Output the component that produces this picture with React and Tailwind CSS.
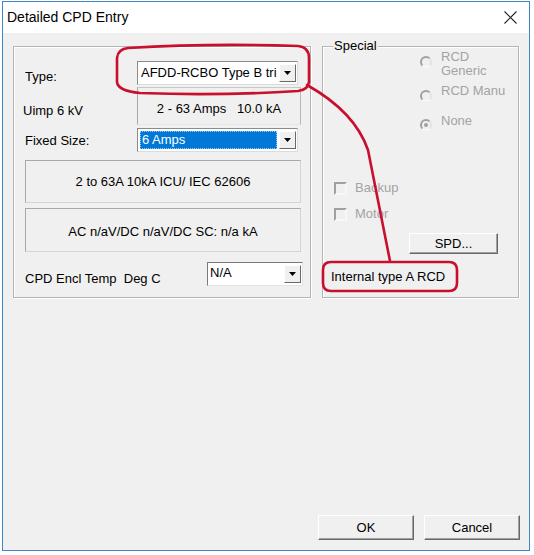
import React from 'react';

const font = "font-['Liberation_Sans',Arial,sans-serif]";

const Arrow = () => (
  <svg width="7" height="4" viewBox="0 0 7 4">
    <polygon points="0,0 7,0 3.5,4" fill="#000" />
  </svg>
);

const DropButton = () => (
  <div className="w-[17px] h-[18px] mr-[1px] shrink-0 flex items-center justify-center bg-[#f0f0f0] border border-t-white border-l-white border-b-[#696969] border-r-[#696969]">
    <Arrow />
  </div>
);

const Combo = ({ value, width, selected }) => (
  <div
    className={`${width} h-[24px] shrink-0 flex items-center bg-white border border-t-[#8a8a8a] border-l-[#8a8a8a] border-b-[#dcdcdc] border-r-[#dcdcdc]`}
  >
    {selected ? (
      <div className="flex-1 h-[18px] ml-[2px] mr-[2px] bg-[#0078d7] text-white pl-[1px] leading-[16px] border border-dotted border-[#9ec9f0]">
        {value}
      </div>
    ) : (
      <div className="flex-1 pl-[3px] whitespace-nowrap overflow-hidden">{value}</div>
    )}
    <DropButton />
  </div>
);

const Radio = ({ checked, children, className = '' }) => (
  <div className={`flex items-start ${className}`}>
    <div className="mt-[6px] w-[12px] h-[12px] shrink-0 rounded-full border-2 border-t-[#a0a0a0] border-l-[#a0a0a0] border-b-[#f7f7f7] border-r-[#e4e4e4] flex items-center justify-center">
      {checked && <div className="w-[4px] h-[4px] rounded-full bg-[#a0a0a0]" />}
    </div>
    <div className="ml-[9px] text-[#a3a3a3] leading-[14px]">{children}</div>
  </div>
);

const Check = ({ label, className = '' }) => (
  <div className={`flex items-center h-[14px] ${className}`}>
    <div className="w-[13px] h-[13px] shrink-0 border-2 border-t-[#a0a0a0] border-l-[#a0a0a0] border-b-[#f7f7f7] border-r-[#f7f7f7] bg-[#f0f0f0]" />
    <span className="ml-[8px] text-[#a3a3a3] leading-[14px]">{label}</span>
  </div>
);

const Button = ({ label, className = '' }) => (
  <div
    className={`flex items-center justify-center bg-[#f0f0f0] border border-t-white border-l-white border-b-[#696969] border-r-[#696969] shadow-[inset_-1px_-1px_0_#a0a0a0] ${className}`}
  >
    {label}
  </div>
);

const groupCls =
  'border border-[#b4b4b4] shadow-[inset_1px_1px_0_#fff,1px_1px_0_#fff]';

export default function App() {
  return (
    <div className={`relative w-[534px] h-[555px] bg-white pl-[2px] pt-[1px] text-[13px] text-black ${font}`}>
      <div className="w-[528px] h-[550px] flex flex-col bg-[#f0f0f0] border border-[#3f86c7]">
        {/* title bar */}
        <div className="h-[31px] shrink-0 bg-white flex items-center justify-between pl-[4px] pr-[12px]">
          <span className="text-[14px]">Detailed CPD Entry</span>
          <svg width="13" height="13" viewBox="0 0 13 13">
            <path d="M0.5 0.5 L12.5 12.5 M12.5 0.5 L0.5 12.5" stroke="#222" strokeWidth="1.1" />
          </svg>
        </div>

        <div className="flex pl-[10px] pt-[13px]">
          {/* left group */}
          <div className={`w-[298px] h-[252px] flex flex-col ${groupCls}`}>
            <div className="mt-[14px] h-[24px] flex items-center pl-[11px]">
              <span className="w-[112px] shrink-0 pt-[7px]">Type:</span>
              <Combo width="w-[161px]" value="AFDD-RCBO Type B tri" />
            </div>
            <div className="mt-[2px] h-[38px] flex items-center pl-[9px]">
              <span className="w-[114px] shrink-0 pt-[10px]">Uimp 6 kV</span>
              <div className="w-[164px] h-[38px] flex items-center justify-center pt-[5px] border border-t-[#c8c8c8] border-l-[#a8a8a8] border-b-[#e6e6e6] border-r-[#b8b8b8]">
                <span className="whitespace-pre">2 - 63 Amps   10.0 kA</span>
              </div>
            </div>
            <div className="mt-[3px] h-[24px] flex items-center pl-[11px]">
              <span className="w-[112px] shrink-0 pt-[1px]">Fixed Size:</span>
              <Combo width="w-[161px]" value="6 Amps" selected />
            </div>
            <div className="mt-[8px] ml-[11px] w-[276px] h-[43px] flex items-center justify-center border border-t-[#a8a8a8] border-l-[#a8a8a8] border-b-[#d4d4d4] border-r-[#d4d4d4]">
              2 to 63A 10kA ICU/ IEC 62606
            </div>
            <div className="mt-[5px] ml-[11px] w-[276px] h-[44px] flex items-center justify-center pt-[3px] border border-t-[#a8a8a8] border-l-[#a8a8a8] border-b-[#d4d4d4] border-r-[#d4d4d4]">
              AC n/aV/DC n/aV/DC SC: n/a kA
            </div>
            <div className="mt-[10px] h-[24px] flex items-center pl-[11px]">
              <span className="w-[182px] shrink-0 pt-[9px] whitespace-pre">CPD Encl Temp  Deg C</span>
              <div className="w-[96px] h-[24px] shrink-0 flex items-center bg-white border border-t-[#7a7a7a] border-l-[#7a7a7a] border-b-[#e3e3e3] border-r-[#e3e3e3]">
                <div className="flex-1 pl-[2px] self-start pt-[2px] leading-[16px]">N/A</div>
                <DropButton />
              </div>
            </div>
          </div>

          {/* right group */}
          <div className={`relative ml-[11px] w-[197px] h-[252px] flex flex-col ${groupCls}`}>
            <span className="absolute left-[10px] top-[-8px] px-[1px] bg-[#f0f0f0] leading-[14px]">Special</span>
            <Radio className="mt-[3px] ml-[97px]">
              RCD
              <br />
              Generic
            </Radio>
            <Radio className="mt-[6px] ml-[97px]">
              <span className="block">RCD Manu</span>
            </Radio>
            <Radio className="mt-[11px] ml-[97px]" checked>
              <span className="block mt-[1px]">None</span>
            </Radio>
            <Check label="Backup" className="mt-[50px] ml-[11px]" />
            <Check label="Motor" className="mt-[12px] ml-[11px]" />
            <Button label="SPD..." className="mt-[12px] ml-[86px] w-[89px] h-[21px]" />
            <div className="mt-[16px] ml-[8px] leading-[14px]">Internal type A RCD</div>
          </div>
        </div>

        <div className="flex-1" />

        <div className="flex justify-end gap-[10px] pr-[9px] pb-[10px]">
          <Button label="OK" className="w-[96px] h-[25px]" />
          <Button label="Cancel" className="w-[96px] h-[25px]" />
        </div>
      </div>

      {/* red annotation marks */}
      <svg className="absolute left-0 top-0 pointer-events-none" width="534" height="555" viewBox="0 0 534 555">
        <g fill="none" stroke="#c8102e" strokeWidth="2.6" strokeLinejoin="round" strokeLinecap="round">
          <path d="M128 48 Q210 43 298 46 Q309 47 309 58 L309 82 Q308 90 298 91 Q220 96 140 93 Q118 91 117 82 L117 58 Q118 49 128 48 Z" />
          <path d="M307 85 Q355 112 368 150 Q378 200 390 261" />
          <path d="M331 262 L449 262 Q457 262 457 270 L457 283 Q457 291 449 291 L331 291 Q323 291 323 283 L323 270 Q323 262 331 262 Z" />
        </g>
      </svg>
    </div>
  );
}
